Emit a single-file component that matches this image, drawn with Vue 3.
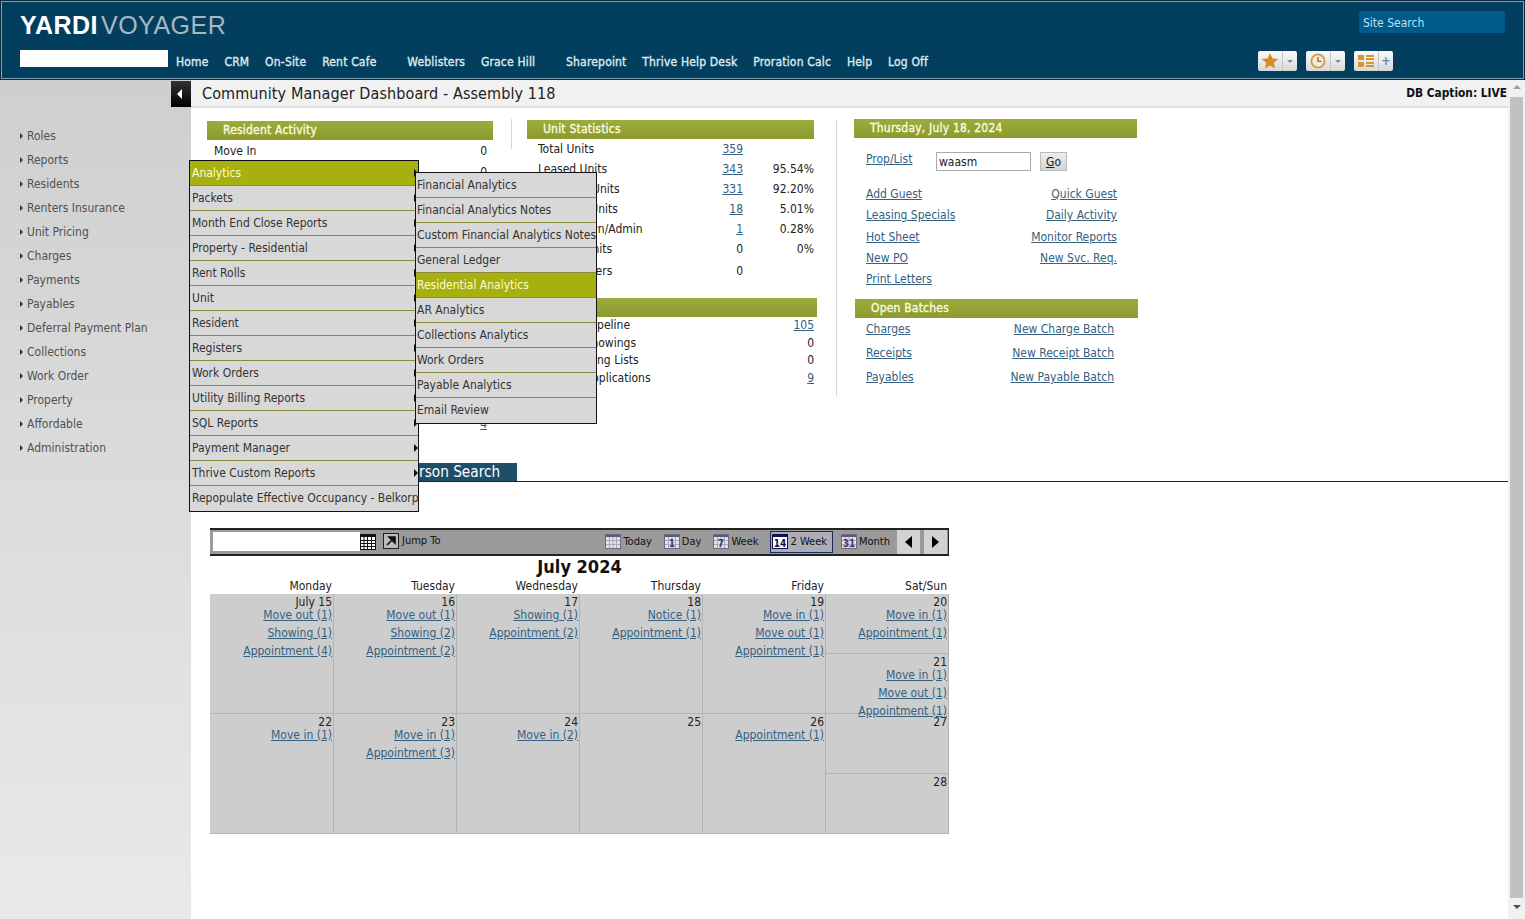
<script setup>
import { ref } from 'vue';

const navLinks = ref([
  { label: 'Home' }, { label: 'CRM' }, { label: 'On-Site' }, { label: 'Rent Cafe', gap: true },
  { label: 'Weblisters' }, { label: 'Grace Hill', gap: true }, { label: 'Sharepoint' },
  { label: 'Thrive Help Desk' }, { label: 'Proration Calc' }, { label: 'Help' }, { label: 'Log Off' }
]);

const sideItems = ['Roles', 'Reports', 'Residents', 'Renters Insurance', 'Unit Pricing', 'Charges', 'Payments',
  'Payables', 'Deferral Payment Plan', 'Collections', 'Work Order', 'Property', 'Affordable', 'Administration'];

const unitStats = [
  { label: 'Total Units', count: '359', link: true, pct: '' },
  { label: 'Leased Units', count: '343', link: true, pct: '95.54%' },
  { label: 'Occupied Units', count: '331', link: true, pct: '92.20%' },
  { label: 'Available Units', count: '18', link: true, pct: '5.01%' },
  { label: 'Model/Down/Admin', count: '1', link: true, pct: '0.28%' },
  { label: 'Pending Units', count: '0', pct: '0%' },
  { label: 'Unit Transfers', count: '0', pct: '', tall: true }
];

const pipeline = [
  { label: 'Prospect Pipeline', count: '105', link: true },
  { label: 'Pending Showings', count: '0' },
  { label: 'Open Waiting Lists', count: '0' },
  { label: 'Pending Applications', count: '9', link: true }
];

const leftLinks = ['Add Guest', 'Leasing Specials', 'Hot Sheet', 'New PO', 'Print Letters'];
const rightLinks = ['Quick Guest', 'Daily Activity', 'Monitor Reports', 'New Svc. Req.'];
const batches = [['Charges', 'New Charge Batch'], ['Receipts', 'New Receipt Batch'], ['Payables', 'New Payable Batch']];

const mainMenu = [
  { label: 'Analytics', active: true }, { label: 'Packets' }, { label: 'Month End Close Reports' },
  { label: 'Property - Residential' }, { label: 'Rent Rolls' }, { label: 'Unit' }, { label: 'Resident' },
  { label: 'Registers' }, { label: 'Work Orders' }, { label: 'Utility Billing Reports' }, { label: 'SQL Reports' },
  { label: 'Payment Manager' }, { label: 'Thrive Custom Reports' },
  { label: 'Repopulate Effective Occupancy - Belkorp', noArrow: true }
];

const subMenu = [
  { label: 'Financial Analytics' }, { label: 'Financial Analytics Notes' }, { label: 'Custom Financial Analytics Notes' },
  { label: 'General Ledger' }, { label: 'Residential Analytics', active: true }, { label: 'AR Analytics' },
  { label: 'Collections Analytics' }, { label: 'Work Orders' }, { label: 'Payable Analytics' }, { label: 'Email Review' }
];

const views = [
  { label: 'Today', num: '' }, { label: 'Day', num: '1' }, { label: 'Week', num: '7' },
  { label: '2 Week', num: '14', active: true }, { label: 'Month', num: '31' }
];

const dayNames = ['Monday', 'Tuesday', 'Wednesday', 'Thursday', 'Friday', 'Sat/Sun'];

const weeks = [
  [
    { date: 'July 15', links: ['Move out (1)', 'Showing (1)', 'Appointment (4)'] },
    { date: '16', links: ['Move out (1)', 'Showing (2)', 'Appointment (2)'] },
    { date: '17', links: ['Showing (1)', 'Appointment (2)'] },
    { date: '18', links: ['Notice (1)', 'Appointment (1)'] },
    { date: '19', links: ['Move in (1)', 'Move out (1)', 'Appointment (1)'] },
    { split: [
      { date: '20', links: ['Move in (1)', 'Appointment (1)'] },
      { date: '21', links: ['Move in (1)', 'Move out (1)', 'Appointment (1)'] }
    ] }
  ],
  [
    { date: '22', links: ['Move in (1)'] },
    { date: '23', links: ['Move in (1)', 'Appointment (3)'] },
    { date: '24', links: ['Move in (2)'] },
    { date: '25', links: [] },
    { date: '26', links: ['Appointment (1)'] },
    { split: [
      { date: '27', links: [] },
      { date: '28', links: [] }
    ] }
  ]
];
</script>

<template>
  <div class="page">
    <header class="topbar">
      <div class="top-row">
        <div class="logo"><b>YARDI</b><span>VOYAGER</span></div>
        <div class="site-search">Site Search</div>
      </div>
      <div class="nav-row">
        <div class="white-box"></div>
        <nav class="nav">
          <a v-for="n in navLinks" :key="n.label" :class="{ 'nav-gap': n.gap }">{{ n.label }}</a>
        </nav>
        <div class="tools">
          <div class="tool">
            <span class="tool-main">
              <svg width="18" height="16" viewBox="0 0 18 16"><path d="M9 0l2.400 5.400 5.800.6-4.400 3.800 1.300 5.700L9 12.600l-5.100 2.900 1.300-5.700L.8 6l5.800-.6z" fill="#d98a1f"/></svg>
            </span>
            <span class="tool-side caret"></span>
          </div>
          <div class="tool">
            <span class="tool-main">
              <svg width="18" height="16" viewBox="0 0 18 16"><circle cx="9" cy="8" r="6.600" fill="#f3ead8" stroke="#d09a50" stroke-width="1.800"/><path d="M9 4v4.400h3.600" fill="none" stroke="#8a7050" stroke-width="1.400"/></svg>
            </span>
            <span class="tool-side caret"></span>
          </div>
          <div class="tool">
            <span class="tool-main">
              <svg width="18" height="14" viewBox="0 0 18 14"><path d="M1 1h6v5H1zM1 8h6v5H1zM9 1h8v2H9zM9 4h8v2H9zM9 8h8v2H9zM9 11h8v2H9z" fill="#d9962a"/></svg>
            </span>
            <span class="tool-side plus">+</span>
          </div>
        </div>
      </div>
    </header>

    <div class="body">
      <aside class="sidebar">
        <div v-for="s in sideItems" :key="s" class="side-item"><i class="side-arrow"></i>{{ s }}</div>
      </aside>

      <main class="main">
        <button class="collapse"><i></i></button>
        <div class="title-bar">
          <h1>Community Manager Dashboard - Assembly 118</h1>
          <strong>DB Caption: LIVE</strong>
        </div>

        <section class="dash">
          <div class="col col-a">
            <div class="band">Resident Activity</div>
            <div class="act-row"><span>Move In</span><span>0</span></div>
            <div class="act-row"><span>Move Out</span><span>0</span></div>
            <div class="act-row act-last"><span>Applications</span><a class="lnk">4</a></div>
          </div>
          <div class="divider div-a"></div>
          <div class="col col-b">
            <div class="band">Unit Statistics</div>
            <div class="stats">
              <div v-for="r in unitStats" :key="r.label" class="stat-row" :class="{ tall: r.tall }">
                <span>{{ r.label }}</span>
                <a v-if="r.link" class="lnk num">{{ r.count }}</a>
                <span v-else class="num">{{ r.count }}</span>
                <span class="num">{{ r.pct }}</span>
              </div>
            </div>
            <div class="band band-b">Leasing</div>
            <div class="pipe">
              <div v-for="r in pipeline" :key="r.label" class="pipe-row">
                <span>{{ r.label }}</span>
                <a v-if="r.link" class="lnk">{{ r.count }}</a>
                <span v-else>{{ r.count }}</span>
              </div>
            </div>
          </div>
          <div class="divider div-b"></div>
          <div class="col col-c">
            <div class="band">Thursday, July 18, 2024</div>
            <div class="prop-row">
              <a class="lnk">Prop/List</a>
              <input class="prop-input" value="waasm" />
              <button class="go"><u>G</u>o</button>
            </div>
            <div class="link-cols">
              <div class="link-col"><a v-for="l in leftLinks" :key="l" class="lnk">{{ l }}</a></div>
              <div class="link-col link-right"><a v-for="l in rightLinks" :key="l" class="lnk">{{ l }}</a></div>
            </div>
            <div class="band band-c">Open Batches</div>
            <div class="batches">
              <div v-for="b in batches" :key="b[0]" class="batch-row">
                <a class="lnk">{{ b[0] }}</a>
                <a class="lnk">{{ b[1] }}</a>
              </div>
            </div>
          </div>
        </section>

        <div class="tabs"><span class="tab">Person Search</span></div>

        <section class="calendar">
          <div class="cal-bar">
            <input class="cal-input" />
            <svg class="cal-grid" width="16" height="16" viewBox="0 0 16 16">
              <rect x="0.500" y="0.500" width="15" height="15" fill="#fff" stroke="#111"/>
              <rect x="0" y="0" width="16" height="3" fill="#111"/>
              <path d="M4 3v13M7.500 3v13M11.500 3v13M0 6.500h16M0 9.500h16M0 12.500h16" stroke="#111" fill="none"/>
            </svg>
            <span class="jump-icon">
              <svg width="12" height="12" viewBox="0 0 12 12"><path d="M2 10l6-6M4 2h6v6z" stroke="#111" stroke-width="1.600" fill="#111"/></svg>
            </span>
            <span class="jump-label">Jump To</span>
            <div class="views">
              <span v-for="v in views" :key="v.label" class="view" :class="{ on: v.active }">
                <svg width="16" height="15" viewBox="0 0 16 15">
                  <rect x="0.500" y="0.500" width="15" height="14" :fill="v.active ? '#fff' : '#e2e2ee'" :stroke="v.active ? '#101050' : '#6a6a82'"/>
                  <rect x="1" y="1" width="14" height="2" :fill="v.active ? '#101050' : '#5a5a80'"/>
                  <path v-if="!v.active" d="M1 6.500h14M1 10.500h14M4.500 3v11M8 3v11M11.500 3v11" stroke="#a8a8bc" fill="none"/>
                  <text x="8" y="13" text-anchor="middle" class="view-num" :fill="v.active ? '#101050' : '#3c3c64'">{{ v.num }}</text>
                </svg>
                <span class="view-label">{{ v.label }}</span>
              </span>
            </div>
            <button class="step"><i class="tri-left"></i></button>
            <button class="step"><i class="tri-right"></i></button>
          </div>

          <h2 class="cal-title">July 2024</h2>
          <div class="cal-head">
            <div v-for="d in dayNames" :key="d">{{ d }}</div>
          </div>
          <div v-for="(w, wi) in weeks" :key="wi" class="cal-week">
            <template v-for="(c, ci) in w" :key="ci">
              <div v-if="!c.split" class="cal-cell">
                <div>{{ c.date }}</div>
                <a v-for="l in c.links" :key="l" class="lnk cal-link">{{ l }}</a>
              </div>
              <div v-else class="cal-split">
                <div v-for="s in c.split" :key="s.date" class="cal-half">
                  <div>{{ s.date }}</div>
                  <a v-for="l in s.links" :key="l" class="lnk cal-link">{{ l }}</a>
                </div>
              </div>
            </template>
          </div>
        </section>
      </main>

      <div class="scrollbar">
        <i class="sb-up"></i>
        <div class="sb-thumb"></div>
        <i class="sb-down"></i>
      </div>
    </div>

    <!-- popup menus lie over the dashboard -->
    <ul class="menu menu-main">
      <li v-for="m in mainMenu" :key="m.label" :class="{ active: m.active }">
        {{ m.label }}<i v-if="!m.noArrow" class="menu-arrow"></i>
      </li>
    </ul>
    <ul class="menu menu-sub">
      <li v-for="m in subMenu" :key="m.label" :class="{ active: m.active }">{{ m.label }}</li>
    </ul>
  </div>
</template>

<style>
html, body { margin: 0; background: #fff; overflow: hidden; }
</style>

<style scoped>
.page {
  position: relative;
  width: 1525px;
  height: 919px;
  overflow: hidden;
  font-family: "DejaVu Sans", Verdana, sans-serif;
  font-stretch: condensed;
  font-size: 12px;
  color: #222;
}

/* header */
.topbar {
  box-sizing: border-box;
  height: 80px;
  background: #023f5f;
  border: 1px solid #0b2a3c;
  box-shadow: inset 0 0 0 1px #7fa3b5;
  padding: 10px 19px 0;
}
.top-row { display: flex; justify-content: space-between; height: 35px; }
.logo {
  font-family: "Liberation Sans", Arial, sans-serif;
  font-stretch: normal;
  font-size: 25px;
  line-height: 28px;
  letter-spacing: 0.5px;
  color: #a6b8c2;
}
.logo b { color: #fff; margin-right: 3px; }
.site-search {
  box-sizing: border-box;
  width: 146px;
  height: 22px;
  background: #005a8c;
  color: #b9e0f5;
  line-height: 25px;
  padding-left: 4px;
}
.nav-row { display: flex; align-items: flex-start; height: 30px; margin-top: 4px; }
.white-box { width: 148px; height: 17px; background: #fff; }
.nav {
  display: flex;
  gap: 15.800px;
  margin-left: 8px;
  padding-top: 4px;
  color: #dfe8ee;
  line-height: 16px;
  letter-spacing: 0.18px;
  -webkit-text-stroke: 0.35px #dfe8ee;
}
.nav-gap { margin-right: 15px; }
.tools { display: flex; gap: 9px; margin-left: auto; margin-right: 112px; margin-top: 1px; }
.tool {
  display: flex;
  width: 39px;
  height: 20px;
  border-radius: 2px;
  background: linear-gradient(#fafafa, #d8d8d8);
}
.tool-main { display: flex; align-items: center; justify-content: center; width: 24px; border-right: 1px solid #c4c4c4; }
.tool-side { flex: 1; position: relative; color: #5f8cab; text-align: center; line-height: 19px; font-weight: bold; font-size: 13px; }
.caret::after {
  content: '';
  position: absolute;
  left: 4px;
  top: 9px;
  border: 3px solid transparent;
  border-top: 3px solid #6f90a8;
}

/* layout */
.body { display: flex; height: 839px; }
.sidebar {
  box-sizing: border-box;
  width: 191px;
  flex: none;
  padding-top: 44px;
  background: linear-gradient(#cfcfcf, #e9e9e9);
  color: #505050;
}
.side-item { display: flex; align-items: center; height: 24px; padding-left: 20px; }
.side-arrow {
  width: 0;
  height: 0;
  margin-right: 4px;
  border-left: 3px solid #333;
  border-top: 3.500px solid transparent;
  border-bottom: 3.500px solid transparent;
}
.main { position: relative; flex: 1; min-width: 0; }
.collapse {
  position: absolute;
  left: -20px;
  top: 1px;
  width: 20px;
  height: 26px;
  padding: 0;
  border: 0;
  background: linear-gradient(#333, #000);
}
.collapse i {
  display: block;
  width: 0;
  margin-left: 6px;
  border-right: 5px solid #fff;
  border-top: 5px solid transparent;
  border-bottom: 5px solid transparent;
}
.title-bar {
  box-sizing: border-box;
  display: flex;
  align-items: center;
  justify-content: space-between;
  height: 28px;
  padding-left: 11px;
  background: #f1f1f1;
  border-bottom: 2px solid #dedede;
  white-space: nowrap;
}
.title-bar h1 { margin: 0; font-size: 16px; letter-spacing: 0.1px; font-weight: normal; color: #222; }
.title-bar strong { color: #111; margin-right: 1px; font-size: 11.800px; }

/* dashboard */
.dash { display: flex; align-items: flex-start; height: 355px; padding-top: 11px; box-sizing: border-box; margin-left: 16px; }
.col { flex: none; }
.band {
  height: 19px;
  line-height: 19px;
  padding-left: 16px;
  color: #fdfde0;
  letter-spacing: 0.2px;
  -webkit-text-stroke: 0.3px #fdfde0;
  background: linear-gradient(#9cab3c, #8d9b2e);
  white-space: nowrap;
}
.col-a { width: 286px; margin-top: 2px; }
.act-row { display: flex; justify-content: space-between; height: 19px; line-height: 19px; padding: 2px 6px 0 7px; }
.act-last { margin-top: 231px; }
.divider { flex: none; width: 1px; background: #d8d8c4; }
.div-a { height: 30px; margin: 0 15px 0 18px; }
.div-b { height: 276px; margin: 1px 17px 0 19px; }
.col-b { width: 290px; margin-top: 1px; }
.col-b > .band:first-child { width: 271px; }
.stats { width: 287px; }
.stat-row { display: grid; grid-template-columns: 154px 51px 71px; height: 20px; line-height: 20px; padding-left: 11px; box-sizing: border-box; width: 287px; }
.stat-row.tall { height: 23px; line-height: 24px; }
.num { text-align: right; }
.band-b { margin-top: 16px; }
.pipe { padding: 0 3px 0 11px; }
.pipe-row { display: flex; justify-content: space-between; height: 17.700px; line-height: 17.700px; }
.col-c { width: 283px; }
.prop-row { display: flex; align-items: flex-start; height: 32px; padding: 14px 0 0 12px; }
.prop-row .lnk { width: 70px; }
.prop-input {
  box-sizing: border-box;
  width: 95px;
  height: 19px;
  padding: 0 2px;
  border: 1px solid #aaa;
  font: inherit;
  color: #222;
}
.go {
  box-sizing: border-box;
  width: 27px;
  height: 19px;
  padding: 0;
  margin-left: 9px;
  border: 1px solid #bbb;
  background: linear-gradient(#eee, #d4d4d4);
  font: inherit;
  color: #222;
}
.link-cols { display: flex; justify-content: space-between; padding: 0 20px 0 12px; height: 115px; }
.link-col { display: flex; flex-direction: column; align-items: flex-start; line-height: 21.300px; }
.link-right { align-items: flex-end; }
.band-c { margin: 0 -1px 0 1px; }
.batches { padding: 1px 23px 0 12px; }
.batch-row { display: flex; justify-content: space-between; height: 24px; line-height: 20px; }
.lnk { color: #35607f; text-decoration: underline; }

/* tabs */
.tabs { height: 18px; border-bottom: 1px solid #222; padding-left: 206px; }
.tab { display: inline-block; height: 18px; line-height: 19px; padding: 0 17px 0 6px; background: #1f4e6b; color: #fff; font-size: 15.200px; }

/* calendar */
.calendar { width: 739px; margin: 46px 0 0 19px; }
.cal-bar {
  box-sizing: border-box;
  display: flex;
  align-items: center;
  height: 28px;
  padding-left: 3px;
  background: #9a9a9a;
  border-top: 2px solid #222;
  border-bottom: 2px solid #222;
  border-right: 1px solid #222;
}
.cal-input { box-sizing: border-box; width: 147px; height: 19px; margin-top: -2px; border: 0; background: #fff; }
.jump-icon {
  box-sizing: border-box;
  display: flex;
  align-items: center;
  justify-content: center;
  width: 16px;
  height: 16px;
  margin: -2px 0 0 7px;
  border: 1px solid #222;
  background: #bbb;
}
.jump-label { margin: -3px 0 0 3px; font-size: 11px; color: #111; }
.views { display: flex; align-items: center; margin-left: auto; margin-right: 1px; }
.view { display: flex; align-items: center; gap: 2px; height: 22px; box-sizing: border-box; padding: 0 6px 2px 6px; font-size: 11px; color: #111; white-space: nowrap; }
.view.on { border: 1px solid #1a2a60; background: #adadb8; padding: 0 5px 1px 1px; margin: 0 2px 0 6px; }
.view-num { font-size: 10px; font-weight: bold; }
.step {
  width: 23px;
  height: 24px;
  margin-right: 4px;
  padding: 0;
  border: 0;
  background: #d2d2d2;
}
.step:last-child { margin-right: 1px; }
.tri-left, .tri-right {
  display: block;
  width: 0;
  margin: 0 auto;
  border-top: 6px solid transparent;
  border-bottom: 6px solid transparent;
}
.tri-left { border-right: 7px solid #000; }
.tri-right { border-left: 7px solid #000; }
.cal-title { margin: 0; height: 22px; line-height: 22px; text-align: center; font-size: 18px; font-weight: bold; color: #111; }
.cal-head { display: grid; grid-template-columns: 124px repeat(5, 123px); height: 17px; line-height: 18px; text-align: right; margin-top: -1px; }
.cal-head div { padding-right: 2px; }
.cal-week { display: grid; grid-template-columns: 124px repeat(5, 123px); height: 120px; background: #cdcdcd; }
.cal-cell, .cal-half { box-sizing: border-box; display: flex; flex-direction: column; align-items: flex-end; padding-right: 1px; line-height: 14px; }
.cal-cell { border-right: 1px solid #b4b4b4; border-bottom: 1px solid #b4b4b4; padding-top: 1px; }
.cal-split { display: grid; grid-template-rows: 60px 60px; border-right: 1px solid #b4b4b4; }
.cal-half { padding-top: 1px; border-bottom: 1px solid #b4b4b4; }
.cal-link { line-height: 18px; }
.cal-link:first-of-type { margin-top: -3px; }

/* scrollbar */
.scrollbar { position: relative; flex: none; width: 17px; background: #f1f1f1; }
.sb-up, .sb-down {
  display: block;
  width: 0;
  margin: 5px auto 0;
  border: 4px solid transparent;
}
.sb-up { border-bottom-color: #a0a0a0; border-top: 0; }
.sb-down { margin-top: 7px; border-top-color: #505050; border-bottom: 0; }
.sb-thumb { margin: 8px 2px 0 2px; height: 801px; background: #c1c1c1; }

/* popup menus */
.menu {
  position: absolute;
  box-sizing: border-box;
  margin: 0;
  padding: 0;
  list-style: none;
  background: #d8d8d8;
  border: 1px solid #111;
}
.menu-main { left: 189px; top: 160px; width: 230px; }
.menu-sub { left: 415px; top: 172px; width: 182px; }
.menu li {
  position: relative;
  box-sizing: border-box;
  height: 25px;
  line-height: 24px;
  padding-left: 2px;
  border-bottom: 1px solid #8a8a3c;
  color: #333;
  white-space: nowrap;
}
.menu-sub li { padding-left: 1px; }
.menu li:last-child { border-bottom: 0; }
.menu li.active { background: #a8b010; color: #fdfdd0; }
.menu-arrow {
  position: absolute;
  right: 0;
  top: 8px;
  border-left: 4px solid #111;
  border-top: 4px solid transparent;
  border-bottom: 4px solid transparent;
}
</style>
